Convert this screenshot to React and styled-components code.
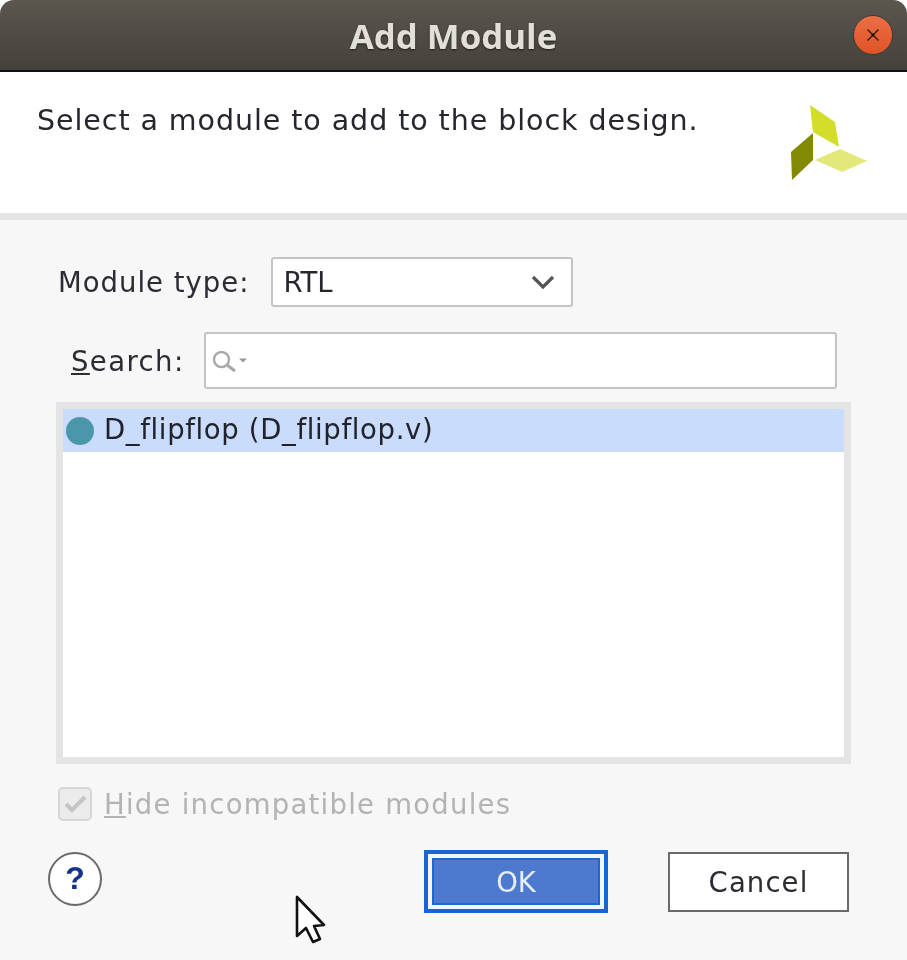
import React from "react";
import styled, { createGlobalStyle } from "styled-components";

const GlobalStyle = createGlobalStyle`
  html, body {
    margin: 0;
    padding: 0;
    background: #fff;
  }
`;

const App = () => {
  return (
    <Dialog>
      <GlobalStyle />
      <TitleBar>
        <Title>Add Module</Title>
        <CloseButton aria-label="Close">
          <svg width="16" height="16" viewBox="0 0 16 16">
            <path d="M2.5 2.5 L13.5 13.5 M13.5 2.5 L2.5 13.5" stroke="#3a2018" strokeWidth="1.5" />
            <circle cx="8" cy="8" r="1.6" fill="#1c100c" />
          </svg>
        </CloseButton>
      </TitleBar>

      <Header>
        <Message>Select a module to add to the block design.</Message>
        <Logo width="78" height="78" viewBox="0 0 78 78">
          <polygon points="21,0 46,17 50,42 24,27" fill="#d2de2a" />
          <polygon points="24,28 24,55 3,75 2,47" fill="#828a04" />
          <polygon points="51,44 78,56 53,67 26,55" fill="#e2e87a" />
        </Logo>
      </Header>

      <Separator />

      <Body>
        <TypeRow>
          <FieldLabel $spacing={1}>Module type:</FieldLabel>
          <Select>
            <span>RTL</span>
            <svg width="26" height="16" viewBox="0 0 26 16">
              <path d="M3 3 L13 13 L23 3" fill="none" stroke="#555" strokeWidth="3.2" />
            </svg>
          </Select>
        </TypeRow>

        <SearchRow>
          <FieldLabel $spacing={1.4}><u>S</u>earch:</FieldLabel>
          <SearchBox>
            <svg width="36" height="28" viewBox="0 0 36 28">
              <circle cx="9.5" cy="12.5" r="7.5" fill="none" stroke="#a8a8a8" strokeWidth="2.4" />
              <path d="M15 18 L23 24" stroke="#a8a8a8" strokeWidth="3.2" />
              <polygon points="27,11.5 35,11.5 31,15.5" fill="#999" />
            </svg>
          </SearchBox>
        </SearchRow>

        <ModuleList>
          <ModuleRow>
            <ModuleDot />
            <ModuleName>D_flipflop (D_flipflop.v)</ModuleName>
          </ModuleRow>
        </ModuleList>

        <CheckRow>
          <CheckBox>
            <svg width="26" height="22" viewBox="0 0 26 22">
              <path d="M4 11 L10 17 L23 4" fill="none" stroke="#c6c6c6" strokeWidth="4.4" />
            </svg>
          </CheckBox>
          <CheckLabel><u>H</u>ide incompatible modules</CheckLabel>
        </CheckRow>

        <Footer>
          <HelpButton>?</HelpButton>
          <Actions>
            <OkButton>OK</OkButton>
            <CancelButton>Cancel</CancelButton>
          </Actions>
        </Footer>
      </Body>

      <Cursor width="36" height="50" viewBox="0 0 36 50">
        <path
          d="M2 2 L2 41 L11 33 L18 47 L25 44 L19 31 L29 30 Z"
          fill="#fff"
          stroke="#111"
          strokeWidth="2.6"
          strokeLinejoin="round"
        />
      </Cursor>
    </Dialog>
  );
};

export default App;

const Dialog = styled.div`
  position: relative;
  width: 907px;
  height: 960px;
  overflow: hidden;
  background: #f7f7f7;
  border-radius: 14px 14px 0 0;
  font-family: "DejaVu Sans", sans-serif;
  color: #26262e;
  filter: blur(0.5px);
`;

const TitleBar = styled.div`
  position: relative;
  height: 70px;
  display: flex;
  align-items: center;
  justify-content: center;
  background: linear-gradient(#5b564e, #45423b);
  border-bottom: 2px solid #141210;
`;

const Title = styled.div`
  font-family: "Open Sans", sans-serif;
  font-weight: 700;
  font-size: 34.8px;
  color: #e2dfd8;
  text-shadow: 0 1px 2px #1c1a16;
`;

const CloseButton = styled.div`
  position: absolute;
  right: 14px;
  top: 15px;
  width: 38px;
  height: 38px;
  border-radius: 50%;
  display: flex;
  align-items: center;
  justify-content: center;
  background: linear-gradient(#ec6f45, #df5326);
  border: 1px solid #3a3c3e;
`;

const Header = styled.div`
  height: 141px;
  background: #fff;
  display: flex;
  justify-content: space-between;
  padding: 31px 40px 0 37px;
  box-sizing: border-box;
`;

const Message = styled.div`
  font-size: 28.5px;
  line-height: 36px;
  letter-spacing: 0.93px;
`;

const Logo = styled.svg`
  flex: none;
  margin-top: 2px;
`;

const Separator = styled.div`
  height: 7px;
  background: #e4e4e4;
`;

const Body = styled.div`
  padding: 37px 56px 0;
  display: flex;
  flex-direction: column;
`;

const TypeRow = styled.div`
  display: flex;
  align-items: center;
  gap: 22px;
  padding-left: 2px;
  height: 50px;
`;

const SearchRow = styled.div`
  display: flex;
  align-items: center;
  gap: 19px;
  padding-left: 15px;
  margin: 25px -15px 0 0;
  height: 57px;
`;

const FieldLabel = styled.label`
  font-size: 27.5px;
  letter-spacing: ${({ $spacing }) => $spacing}px;
  color: #2c2c34;
`;

const Select = styled.div`
  width: 302px;
  height: 50px;
  box-sizing: border-box;
  display: flex;
  align-items: center;
  justify-content: space-between;
  padding: 0 15px 0 10px;
  background: #fff;
  border: 2px solid #c4c4c4;
  border-radius: 3px;
  font-size: 27.5px;
`;

const SearchBox = styled.div`
  width: 633px;
  height: 57px;
  box-sizing: border-box;
  display: flex;
  align-items: center;
  padding: 0 6px;
  background: #fff;
  border: 2px solid #c4c4c4;
  border-radius: 3px;
`;

const ModuleList = styled.div`
  margin-top: 13px;
  width: 795px;
  height: 362px;
  box-sizing: border-box;
  background: #fff;
  border: 7px solid #e4e4e4;
`;

const ModuleRow = styled.div`
  height: 43px;
  display: flex;
  align-items: center;
  gap: 10px;
  padding-left: 3px;
  background: #c9dcfb;
`;

const ModuleName = styled.span`
  font-size: 27.5px;
  letter-spacing: 0.65px;
  color: #22222c;
  margin-top: -3px;
`;

const ModuleDot = styled.span`
  width: 28px;
  height: 28px;
  border-radius: 50%;
  background: #4a96ab;
`;

const CheckRow = styled.div`
  display: flex;
  align-items: center;
  gap: 12px;
  margin-top: 23px;
  padding-left: 2px;
  height: 34px;
`;

const CheckBox = styled.span`
  width: 34px;
  height: 34px;
  box-sizing: border-box;
  display: flex;
  align-items: center;
  justify-content: center;
  background: #ececec;
  border: 2px solid #d6d6d6;
  border-radius: 5px;
`;

const CheckLabel = styled.span`
  font-size: 27.5px;
  letter-spacing: 1.25px;
  color: #b4b2b4;
`;

const Footer = styled.div`
  display: flex;
  justify-content: space-between;
  align-items: center;
  margin: 29px 2px 0 -8px;
`;

const HelpButton = styled.div`
  width: 54px;
  height: 54px;
  box-sizing: border-box;
  margin-bottom: 6px;
  border-radius: 50%;
  border: 2px solid #6a6a6a;
  background: #fff;
  display: flex;
  align-items: center;
  justify-content: center;
  font-family: "Liberation Sans", sans-serif;
  font-weight: 700;
  font-size: 32px;
  color: #14348c;
`;

const Actions = styled.div`
  display: flex;
  align-items: center;
  gap: 60px;
`;

const OkButton = styled.div`
  width: 184px;
  height: 63px;
  box-sizing: border-box;
  display: flex;
  align-items: center;
  justify-content: center;
  background: #4d7acf;
  border: 4px solid #1764d2;
  box-shadow: inset 0 0 0 4px #f2f6fc, inset 0 0 0 6px #1f66cf;
  font-size: 27.5px;
  color: #e8eef8;
`;

const CancelButton = styled.div`
  width: 181px;
  height: 60px;
  box-sizing: border-box;
  display: flex;
  align-items: center;
  justify-content: center;
  background: #fff;
  border: 2px solid #6a6a6a;
  font-size: 27.5px;
  letter-spacing: 1.1px;
  color: #2c2c34;
`;

const Cursor = styled.svg`
  position: absolute;
  left: 295px;
  top: 895px;
`;
